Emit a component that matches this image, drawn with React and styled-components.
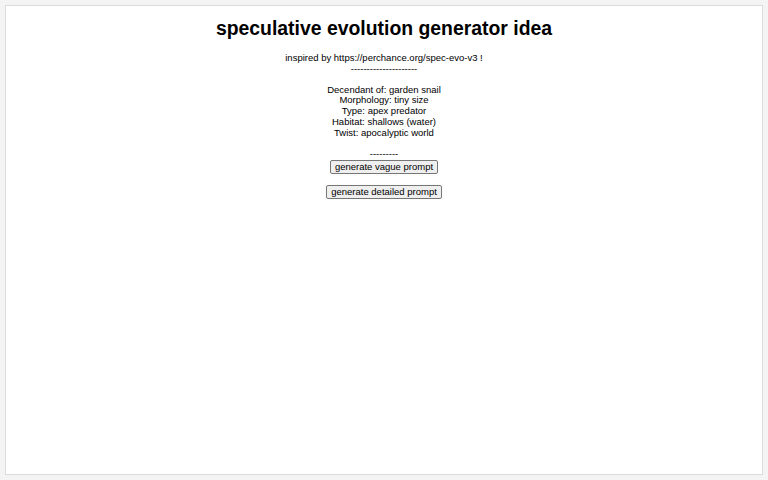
import React from "react"
import styled, { createGlobalStyle } from "styled-components"

const Global = createGlobalStyle`
  html, body {
    margin: 0;
    padding: 0;
    background: #f4f4f4;
  }
  body {
    padding: 5px;
    font-family: "Liberation Sans", Arial, sans-serif;
  }
`

const Card = styled.div`
  box-sizing: border-box;
  height: 470px;
  background: #fff;
  border: 1px solid #dcdcdc;
  text-align: center;
  padding-top: 11px;
  color: #000;
`

const Title = styled.h1`
  margin: 0 0 13px 0;
  font-size: 19.4px;
  font-weight: bold;
  line-height: 23px;
`

const Text = styled.div`
  font-size: 9.5px;
  line-height: 10.8px;
`

const Blank = styled.div`
  height: 10px;
`

const Button = styled.button`
  font-family: "Liberation Sans", Arial, sans-serif;
  font-size: 9.5px;
  line-height: 10px;
  padding: 1px 4px;
  margin: 0;
  background: #efefef;
  border: 1px solid #767676;
  border-radius: 2px;
  color: #000;
`

const ButtonRow = styled.div`
  display: flex;
  flex-direction: column;
  align-items: center;
  gap: 11px;
  padding-top: 1px;
`

const traits = [
  ["Decendant of", "garden snail"],
  ["Morphology", "tiny size"],
  ["Type", "apex predator"],
  ["Habitat", "shallows (water)"],
  ["Twist", "apocalyptic world"],
]

export default function App() {
  return (
    <>
      <Global />
      <Card>
        <Title>speculative evolution generator idea</Title>
        <Text>
          <div>inspired by https://perchance.org/spec-evo-v3 !</div>
          <div>---------------------</div>
          <Blank />
          {traits.map(([k, v]) => (
            <div key={k}>
              {k}: {v}
            </div>
          ))}
          <Blank />
          <div>---------</div>
        </Text>
        <ButtonRow>
          <Button>generate vague prompt</Button>
          <Button>generate detailed prompt</Button>
        </ButtonRow>
      </Card>
    </>
  )
}
